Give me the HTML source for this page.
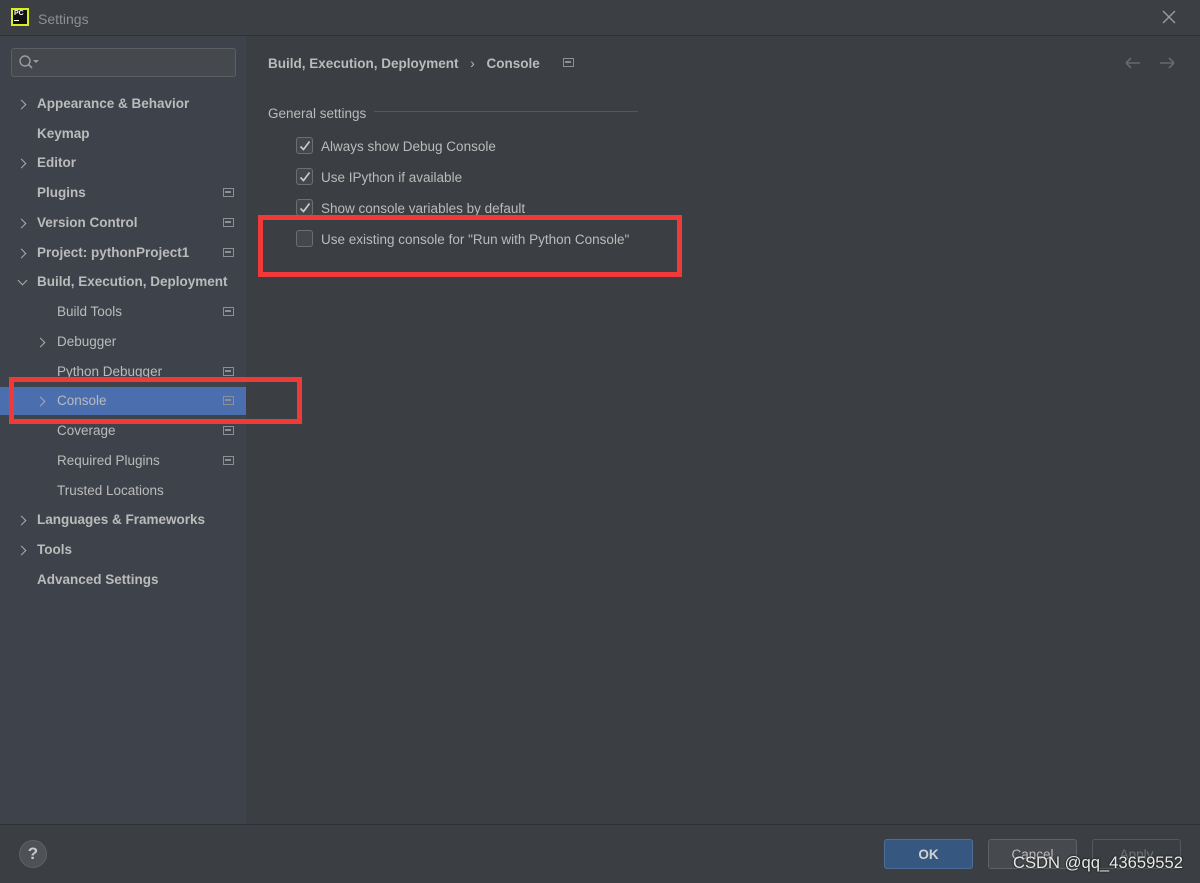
<!DOCTYPE html><html><head><style>
*{margin:0;padding:0;box-sizing:border-box}
body{width:1200px;height:883px;background:#3b3e42;font-family:"Liberation Sans",sans-serif;font-size:13.5px;color:#bbbbbb;position:relative;overflow:hidden}
.a{position:absolute}
.title{left:0;top:0;width:1200px;height:36px;background:#3c3f43;border-bottom:1px solid #2f3134}
.side{left:0;top:36px;width:246px;height:788px;background:#3e434b}
.it{position:absolute;height:20px;line-height:20px;white-space:nowrap}
.b{font-weight:bold;left:37px}
.s{left:57px}
.chev{position:absolute;width:7px;height:7px;border-right:1.5px solid #a9abad;border-bottom:1.5px solid #a9abad}
.r{transform:rotate(-45deg)}
.d{transform:rotate(45deg)}
.ic{position:absolute;left:223px;width:11px;height:9px;border:1.5px solid #8c8f93;background:#3e434b}
.ic:after{content:"";position:absolute;left:1px;top:1.5px;width:6px;height:2px;background:#8c8f93}
.cb{position:absolute;left:296px;width:17px;height:17px;border:1px solid #6b6e72;border-radius:3px;background:#45484b}
.cb svg{position:absolute;left:2px;top:2px}
.foot{left:0;top:824px;width:1200px;height:59px;background:#3b3e42;border-top:1px solid #2f3134}
.btn{position:absolute;top:839px;width:89px;height:30px;border-radius:3px;text-align:center;line-height:30px}
.t{position:absolute;white-space:nowrap}
</style></head><body>
<div class="a title">
 <div class="a" style="left:11px;top:8px;width:18px;height:18px;background:#d9f01f;padding:2px"><div style="width:14px;height:14px;background:#111;color:#fff;font-size:7px;font-weight:bold;line-height:8px;padding-left:1px">PC<div style="width:5px;height:1px;background:#fff;margin-top:2px"></div></div></div>
 <div class="a" style="left:38px;top:11px;color:#8d8f92;font-size:14px">Settings</div>
 <svg class="a" style="left:1162px;top:10px" width="14" height="14"><path d="M1 1L13 13M13 1L1 13" stroke="#9a9c9f" stroke-width="1.4"/></svg>
</div>
<div class="a side">
 <div class="a" style="left:11px;top:12px;width:225px;height:29px;border:1px solid #5b5e63;border-radius:3px;background:#45484c">
  <svg class="a" style="left:6px;top:6px" width="24" height="16"><circle cx="7" cy="6" r="5" fill="none" stroke="#9a9c9f" stroke-width="1.4"/><path d="M10.5 9.5L14 13" stroke="#9a9c9f" stroke-width="1.6"/><path d="M15 5h6l-3 3z" fill="#9a9c9f"/></svg>
 </div>
</div>
<div class="a" style="left:0;top:387px;width:246px;height:28px;background:#4b6eaf"></div>
<div class="a" style="left:0;top:1px">
 <i class="chev r" style="left:18px;top:100px"></i><div class="it b" style="top:93px">Appearance &amp; Behavior</div>
 <div class="it b" style="top:123px">Keymap</div>
 <i class="chev r" style="left:18px;top:159px"></i><div class="it b" style="top:152px">Editor</div>
 <div class="it b" style="top:182px">Plugins</div><i class="ic" style="top:187px"></i>
 <i class="chev r" style="left:18px;top:219px"></i><div class="it b" style="top:212px">Version Control</div><i class="ic" style="top:217px"></i>
 <i class="chev r" style="left:18px;top:249px"></i><div class="it b" style="top:242px">Project: pythonProject1</div><i class="ic" style="top:247px"></i>
 <i class="chev d" style="left:19px;top:276px"></i><div class="it b" style="top:271px">Build, Execution, Deployment</div>
 <div class="it s" style="top:301px">Build Tools</div><i class="ic" style="top:306px"></i>
 <i class="chev r" style="left:37px;top:338px"></i><div class="it s" style="top:331px">Debugger</div>
 <div class="it s" style="top:361px">Python Debugger</div><i class="ic" style="top:366px"></i>
 <i class="chev r" style="left:37px;top:397px"></i><div class="it s" style="top:390px">Console</div><i class="ic" style="top:395px;background:#4b6eaf"></i>
 <div class="it s" style="top:420px">Coverage</div><i class="ic" style="top:425px"></i>
 <div class="it s" style="top:450px">Required Plugins</div><i class="ic" style="top:455px"></i>
 <div class="it s" style="top:480px">Trusted Locations</div>
 <i class="chev r" style="left:18px;top:516px"></i><div class="it b" style="top:509px">Languages &amp; Frameworks</div>
 <i class="chev r" style="left:18px;top:546px"></i><div class="it b" style="top:539px">Tools</div>
 <div class="it b" style="top:569px">Advanced Settings</div>
</div>
<div class="a" style="left:9px;top:377px;width:293px;height:47px;border:5px solid #f03a3a"></div>
<div class="a" style="left:268px;top:56px;font-weight:bold;font-size:13.5px;white-space:nowrap">Build, Execution, Deployment <span style="margin:0 8px;font-weight:normal">›</span> Console</div>
<i class="ic" style="left:563px;top:58px;background:#3b3e42"></i>
<svg class="a" style="left:1124px;top:55px" width="52" height="16"><path d="M2 8h14M2 8l5-5M2 8l5 5M36 8h14M50 8l-5-5M50 8l-5 5" stroke="#66696d" stroke-width="1.6" fill="none"/></svg>
<div class="t" style="left:268px;top:106px">General settings</div>
<div class="a" style="left:374px;top:111px;width:264px;height:1px;background:#55585c"></div>
<div class="cb" style="top:137px"><svg width="12" height="12"><path d="M1.5 6.5L4.5 9.5L10.5 1.5" stroke="#c9cbcd" stroke-width="1.7" fill="none"/></svg></div>
<div class="t" style="left:321px;top:139px">Always show Debug Console</div>
<div class="cb" style="top:168px"><svg width="12" height="12"><path d="M1.5 6.5L4.5 9.5L10.5 1.5" stroke="#c9cbcd" stroke-width="1.7" fill="none"/></svg></div>
<div class="t" style="left:321px;top:170px">Use IPython if available</div>
<div class="cb" style="top:199px"><svg width="12" height="12"><path d="M1.5 6.5L4.5 9.5L10.5 1.5" stroke="#c9cbcd" stroke-width="1.7" fill="none"/></svg></div>
<div class="t" style="left:321px;top:201px">Show console variables by default</div>
<div class="cb" style="top:230px"></div>
<div class="t" style="left:321px;top:232px">Use existing console for "Run with Python Console"</div>
<div class="a" style="left:258px;top:215px;width:424px;height:62px;border:5px solid #f03a3a"></div>
<div class="a foot"></div>
<div class="a" style="left:19px;top:840px;width:28px;height:28px;border-radius:50%;background:#4e5155;border:1px solid #5e6165;color:#c8c8c8;font-weight:bold;font-size:17px;text-align:center;line-height:26px">?</div>
<div class="btn" style="left:884px;background:#365880;border:1px solid #4c6f99;color:#d0d0d0;font-weight:bold">OK</div>
<div class="btn" style="left:988px;background:#46494d;border:1px solid #5e6165;color:#bbb">Cancel</div>
<div class="btn" style="left:1092px;border:1px solid #55585c;color:#6e7175">Apply</div>
<div class="a" style="left:1013px;top:853px;color:#e8e8e8;font-size:16.6px;white-space:nowrap;text-shadow:0 0 2px #000">CSDN @qq_43659552</div>
</body></html>
